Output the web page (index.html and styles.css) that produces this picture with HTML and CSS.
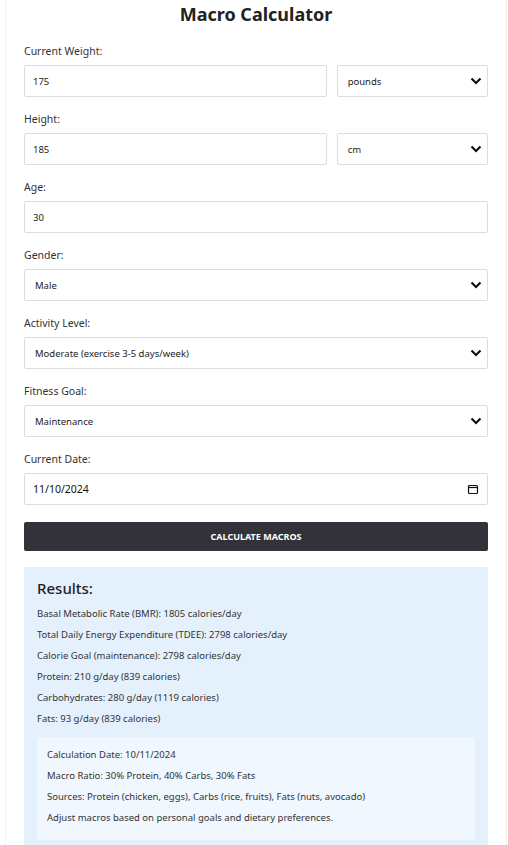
FILE: index.html
```html
<!DOCTYPE html>
<html lang="en">

<head>
    <meta charset="UTF-8">
    <meta name="viewport" content="width=device-width, initial-scale=1.0">
    <title>Macro Calculator</title>
    <link rel="stylesheet" href="styles.css">
</head>

<body>
    <div class="calculator">
        <h1 class="title">Macro Calculator</h1>

        <!-- weight -->
        <div class="form-group">
            <label for="weight">Current Weight:</label>
            <div class="row">
                <input type="text" id="weight" class="field" value="175">
                <div class="select-wrap">
                    <select class="field">
                        <option>pounds</option>
                        <option>kg</option>
                    </select>
                    <svg class="chevron" viewBox="0 0 12 8"><path d="M1.5 1.5l4.5 4.5 4.5-4.5"></path></svg>
                </div>
            </div>
        </div>

        <!-- height -->
        <div class="form-group">
            <label for="height">Height:</label>
            <div class="row">
                <input type="text" id="height" class="field" value="185">
                <div class="select-wrap">
                    <select class="field">
                        <option>cm</option>
                        <option>inches</option>
                    </select>
                    <svg class="chevron" viewBox="0 0 12 8"><path d="M1.5 1.5l4.5 4.5 4.5-4.5"></path></svg>
                </div>
            </div>
        </div>

        <!-- age -->
        <div class="form-group">
            <label for="age">Age:</label>
            <input type="text" id="age" class="field" value="30">
        </div>

        <!-- gender -->
        <div class="form-group">
            <label for="gender">Gender:</label>
            <div class="select-wrap">
                <select id="gender" class="field">
                    <option>Male</option>
                    <option>Female</option>
                </select>
                <svg class="chevron" viewBox="0 0 12 8"><path d="M1.5 1.5l4.5 4.5 4.5-4.5"></path></svg>
            </div>
        </div>

        <!-- activity -->
        <div class="form-group">
            <label for="activity">Activity Level:</label>
            <div class="select-wrap">
                <select id="activity" class="field">
                    <option>Moderate (exercise 3-5 days/week)</option>
                </select>
                <svg class="chevron" viewBox="0 0 12 8"><path d="M1.5 1.5l4.5 4.5 4.5-4.5"></path></svg>
            </div>
        </div>

        <!-- goal -->
        <div class="form-group">
            <label for="goal">Fitness Goal:</label>
            <div class="select-wrap">
                <select id="goal" class="field">
                    <option>Maintenance</option>
                </select>
                <svg class="chevron" viewBox="0 0 12 8"><path d="M1.5 1.5l4.5 4.5 4.5-4.5"></path></svg>
            </div>
        </div>

        <!-- date -->
        <div class="form-group">
            <label for="date">Current Date:</label>
            <div class="date-wrap">
                <input type="text" id="date" class="field field-date" value="11/10/2024">
                <svg class="calendar" viewBox="0 0 12 12">
                    <rect x="1.5" y="2.5" width="9" height="8" rx="1"></rect>
                    <path d="M1.5 4.5h9"></path>
                </svg>
            </div>
        </div>

        <button class="calc-button">CALCULATE MACROS</button>

        <!-- results -->
        <div class="results">
            <h3>Results:</h3>
            <p>Basal Metabolic Rate (BMR): 1805 calories/day</p>
            <p>Total Daily Energy Expenditure (TDEE): 2798 calories/day</p>
            <p>Calorie Goal (maintenance): 2798 calories/day</p>
            <p>Protein: 210 g/day (839 calories)</p>
            <p>Carbohydrates: 280 g/day (1119 calories)</p>
            <p>Fats: 93 g/day (839 calories)</p>

            <div class="notes">
                <p>Calculation Date: 10/11/2024</p>
                <p>Macro Ratio: 30% Protein, 40% Carbs, 30% Fats</p>
                <p>Sources: Protein (chicken, eggs), Carbs (rice, fruits), Fats (nuts, avocado)</p>
                <p>Adjust macros based on personal goals and dietary preferences.</p>
            </div>
        </div>
    </div>
</body>

</html>
```

FILE: styles.css
```css
/* base */
body {
    margin: 0;
    padding: 0;
    font-family: "Noto Sans", "Open Sans", sans-serif;
    background: #fff;
    color: #333;
}

/* main card */
.calculator {
    width: 502px;
    box-sizing: border-box;
    margin-left: 5px;
    padding: 0 18px 10px;
    border-left: 1px solid #f0f0f0;
    border-right: 1px solid #f0f0f0;
    background: #fff;
}

.title {
    margin: 0;
    font-size: 18px;
    line-height: 28px;
    font-weight: bold;
    text-align: center;
    color: #222;
}

/* form */
.form-group {
    margin-bottom: 14px;
}

.form-group:first-of-type {
    margin-top: 15px;
}

.form-group label {
    display: block;
    font-size: 10.5px;
    line-height: 16px;
    margin-bottom: 6px;
    color: #333;
}

.row {
    display: grid;
    grid-template-columns: 2fr 1fr;
    gap: 10px;
}

.field {
    display: block;
    width: 100%;
    box-sizing: border-box;
    height: 32px;
    padding: 0 8px;
    border: 1px solid #ddd;
    border-radius: 2px;
    background: #fff;
    font-family: inherit;
    font-size: 9.5px;
    color: #222;
    outline: none;
}

select.field {
    appearance: none;
    -webkit-appearance: none;
    padding-left: 10px;
}

.select-wrap,
.date-wrap {
    position: relative;
    min-width: 0;
}

.chevron {
    position: absolute;
    right: 6px;
    top: 12px;
    width: 12px;
    height: 8px;
    fill: none;
    stroke: #111;
    stroke-width: 2.2;
    pointer-events: none;
}

.field-date {
    font-size: 10.5px;
    color: #111;
}

.calendar {
    position: absolute;
    right: 9px;
    top: 10px;
    width: 12px;
    height: 12px;
    fill: none;
    stroke: #111;
    stroke-width: 1.2;
    pointer-events: none;
}

/* button */
.calc-button {
    display: block;
    width: 100%;
    height: 29px;
    margin-top: 17px;
    border: none;
    border-radius: 2px;
    background: #333238;
    color: #fff;
    font-family: inherit;
    font-size: 9px;
    font-weight: bold;
    cursor: pointer;
}

/* results */
.results {
    margin-top: 16px;
    padding: 10px 13px 14px;
    background: #e4f1fd;
    border-radius: 2px;
}

.results h3 {
    margin: 0 0 4px;
    font-size: 15px;
    line-height: 22px;
    font-weight: 500;
    color: #222;
}

.results p {
    margin: 0;
    font-size: 9.5px;
    line-height: 21px;
    color: #333;
}

.notes {
    margin-top: 8px;
    padding: 7px 10px 12px;
    background: #f0f7fe;
    border-radius: 2px;
}
```
